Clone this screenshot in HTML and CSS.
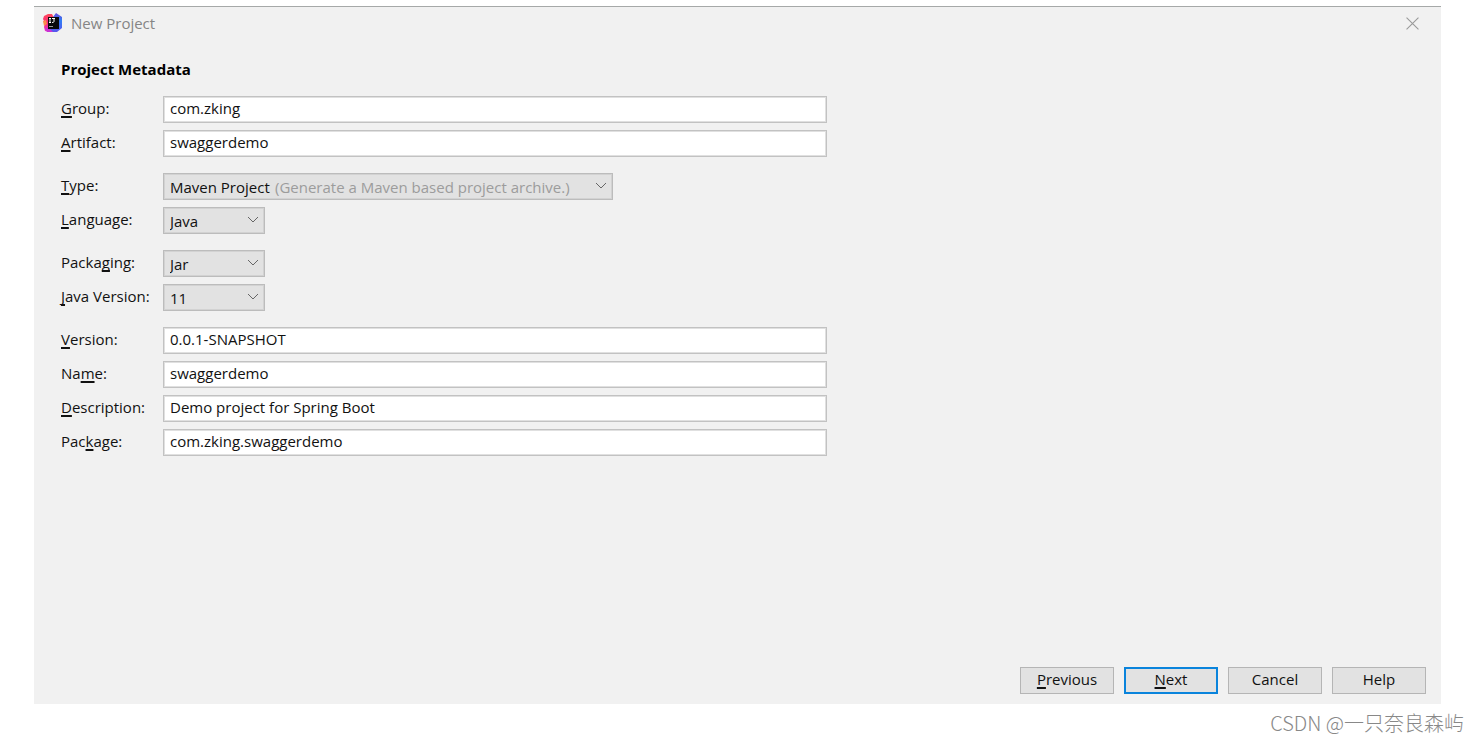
FILE: index.html
```html
<!DOCTYPE html>
<html lang="en">
<head>
<meta charset="utf-8">
<meta name="viewport" content="width=device-width, initial-scale=1">
<title>New Project</title>
<link rel="stylesheet" href="styles.css">
</head>
<body>
<main class="window">
  <header class="titlebar">
    <svg class="logo" viewBox="0 0 20 20" aria-hidden="true">
      <defs>
        <linearGradient id="warm" x1="0" y1="0" x2="0" y2="1"><stop offset="0" stop-color="#ff4a5c"/><stop offset=".5" stop-color="#fb2a78"/><stop offset="1" stop-color="#e03ad0"/></linearGradient>
        <linearGradient id="cool" x1="0" y1="0" x2="0" y2="1"><stop offset="0" stop-color="#6a4bd8"/><stop offset=".4" stop-color="#2f7df5"/><stop offset="1" stop-color="#5a55ee"/></linearGradient>
      </defs>
      <path fill="url(#cool)" d="M10 4 13 0 19 4 19 15 14 19 8 19 5 15Z"/>
      <path fill="url(#warm)" d="M1 3 5 1 9 1 11 5 6 19 2 18 1 14 2 10 0 6Z"/>
      <path fill="#fb8a4a" d="M0 8 3 7 4 11 1 13Z"/>
      <path fill="#c833d5" d="M2 15 6 15 10 19 4 19Z"/>
      <path fill="#08080a" d="M5 4H16V16H5Z"/>
      <path fill="none" stroke="#fff" stroke-width="1" d="M6 5.500H8M7 5.500V9.500M6 9.500H8M9 5.500H12M11 5.500V8.500Q11 9.500 9 9.500"/>
      <path fill="#999" d="M6 13H10V14H6Z"/>
    </svg>
    <h1 class="title">New Project</h1>
    <button class="close" type="button" aria-label="Close">
      <svg class="close-icon" viewBox="0 0 12 12" aria-hidden="true"><path d="M.5.5 11.500 11.500M11.500.5.5 11.500"/></svg>
    </button>
  </header>

  <form class="form" id="metadata">
    <h2 class="heading">Project Metadata</h2>
    <div class="group">
      <label class="label" for="group"><u>G</u>roup:</label>
      <input class="field" id="group" type="text" value="com.zking">
      <label class="label" for="artifact"><u>A</u>rtifact:</label>
      <input class="field" id="artifact" type="text" value="swaggerdemo">
    </div>
    <div class="group">
      <label class="label" for="type"><u>T</u>ype:</label>
      <div class="combo combo-wide">
        <select class="select" id="type"><option>Maven Project</option></select>
        <span class="hint">(Generate a Maven based project archive.)</span>
        <svg class="arrow" viewBox="0 0 12 7" aria-hidden="true"><path d="M1 1 6 6 11 1"/></svg>
      </div>
      <label class="label" for="language"><u>L</u>anguage:</label>
      <div class="combo">
        <select class="select" id="language"><option>Java</option></select>
        <svg class="arrow" viewBox="0 0 12 7" aria-hidden="true"><path d="M1 1 6 6 11 1"/></svg>
      </div>
    </div>
    <div class="group">
      <label class="label" for="packaging">Packa<u>g</u>ing:</label>
      <div class="combo">
        <select class="select" id="packaging"><option>Jar</option></select>
        <svg class="arrow" viewBox="0 0 12 7" aria-hidden="true"><path d="M1 1 6 6 11 1"/></svg>
      </div>
      <label class="label" for="java"><u>J</u>ava Version:</label>
      <div class="combo">
        <select class="select" id="java"><option>11</option></select>
        <svg class="arrow" viewBox="0 0 12 7" aria-hidden="true"><path d="M1 1 6 6 11 1"/></svg>
      </div>
    </div>
    <div class="group">
      <label class="label" for="version"><u>V</u>ersion:</label>
      <input class="field" id="version" type="text" value="0.0.1-SNAPSHOT">
      <label class="label" for="name">Na<u>m</u>e:</label>
      <input class="field" id="name" type="text" value="swaggerdemo">
      <label class="label" for="description"><u>D</u>escription:</label>
      <input class="field" id="description" type="text" value="Demo project for Spring Boot">
      <label class="label" for="package">Pac<u>k</u>age:</label>
      <input class="field" id="package" type="text" value="com.zking.swaggerdemo">
    </div>
  </form>

  <footer class="actions">
    <button class="button" type="button"><u>P</u>revious</button>
    <button class="button button-default" type="submit" form="metadata"><u>N</u>ext</button>
    <button class="button" type="button">Cancel</button>
    <button class="button" type="button">Help</button>
  </footer>
</main>
<p class="credit" lang="zh-CN">CSDN @一只奈良森屿</p>
</body>
</html>
```

FILE: styles.css
```css
* {
  box-sizing: border-box;
}

body {
  display: flex;
  flex-direction: column;
  min-height: 100vh;
  margin: 0;
  padding: 6px 15px 4px 34px;
  background: #fff;
  color: #111;
  font: 15px/20px "Open Sans", "Noto Sans", sans-serif;
}

.window {
  display: flex;
  flex: 1;
  flex-direction: column;
  margin-right: 23px;
  border-top: 1px solid #a6a9a8;
  background: #f1f1f1;
}

.titlebar {
  display: flex;
  align-items: center;
  height: 32px;
  padding: 0 22px 0 9px;
}

.logo {
  width: 20px;
  height: 20px;
}

.title {
  flex: 1;
  margin: 0 0 0 8px;
  color: #858585;
  font-size: 15px;
  font-weight: 400;
}

.close {
  display: flex;
  padding: 0;
  border: 0;
  background: none;
}

.close-icon {
  width: 13px;
  height: 13px;
  fill: none;
  stroke: #999;
}

.form {
  display: flex;
  flex: 1;
  flex-direction: column;
  gap: 16px;
  padding: 20px 27px;
}

.heading {
  margin: 0 0 1px;
  color: #000;
  font-size: 15px;
  font-weight: 700;
}

.group {
  display: grid;
  grid-template-columns: 102px minmax(0, 664px);
  row-gap: 7px;
}

.label {
  line-height: 25px;
}

u {
  text-decoration-thickness: 2px;
  text-underline-offset: 2px;
  text-decoration-skip-ink: none;
}

.field,
.select {
  width: 100%;
  height: 27px;
  margin: 0;
  padding: 0 6px 3px;
  border: 1px solid #c2c2c2;
  border-radius: 0;
  background: #fff;
  box-shadow: inset 0 0 0 1px #e0e0e0;
  color: #111;
  font: inherit;
}

.combo {
  position: relative;
  width: 102px;
}

.combo-wide {
  width: 450px;
}

.select {
  padding: 1px 6px 0;
  border-color: #bcbcbc;
  background: #e2e2e2;
  box-shadow: inset 0 0 0 1px #d2d2d2;
  appearance: none;
}

.hint {
  position: absolute;
  top: 4px;
  left: 112px;
  color: #9c9c9c;
  pointer-events: none;
}

.arrow {
  position: absolute;
  top: 9px;
  right: 6px;
  width: 12px;
  height: 7px;
  fill: none;
  stroke: #666;
  pointer-events: none;
}

.actions {
  display: flex;
  justify-content: flex-end;
  gap: 10px;
  padding: 0 15px 10px;
}

.button {
  width: 94px;
  height: 27px;
  padding: 0 0 3px;
  border: 1px solid #b5b5b5;
  background: #e2e2e2;
  color: #111;
  font: inherit;
}

.button-default {
  border: 2px solid #0a84dc;
}

.credit {
  align-self: flex-end;
  margin: 4px 0 0;
  color: #888;
  font: 300 20px/29px "Noto Sans CJK SC", sans-serif;
}
```
